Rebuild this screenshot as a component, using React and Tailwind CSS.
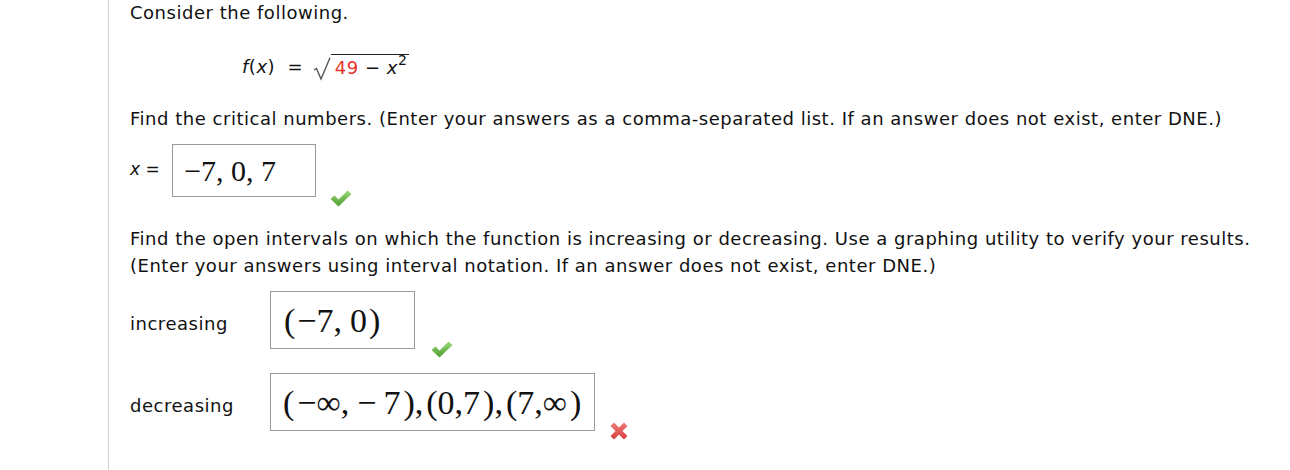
import React from "react";

function Check() {
  return (
    <svg width="22" height="17" viewBox="0 0 22 17">
      <defs>
        <linearGradient id="cg" x1="0" y1="0" x2="0" y2="1">
          <stop offset="0" stopColor="#9ad978" />
          <stop offset="1" stopColor="#4f9b31" />
        </linearGradient>
      </defs>
      <path d="M0.5 9 L4.5 5.5 L8.5 9.5 L17.5 0.5 L21.5 4 L8.5 16.5 Z" fill="url(#cg)" />
    </svg>
  );
}

function Cross() {
  return (
    <svg width="20" height="20" viewBox="0 0 20 20">
      <defs>
        <linearGradient id="xg" x1="0" y1="0" x2="0" y2="1">
          <stop offset="0" stopColor="#f07a78" />
          <stop offset="1" stopColor="#d9403e" />
        </linearGradient>
      </defs>
      <path d="M1.5 5 L5 1.5 L10 6.5 L15 1.5 L18.5 5 L13.5 10 L18.5 15 L15 18.5 L10 13.5 L5 18.5 L1.5 15 L6.5 10 Z" fill="url(#xg)" />
    </svg>
  );
}

export default function App() {
  const sans = { fontFamily: '"DejaVu Sans", Verdana, sans-serif' };
  const serif = { fontFamily: '"Liberation Serif", "DejaVu Serif", serif' };
  return (
    <div className="w-[1290px] h-[470px] bg-white flex text-[#111]" style={sans}>
      <div className="w-[109px] border-r border-[#d0d0d0]" />
      <div className="pl-[21px] pt-[1px] text-[18px] tracking-[0.52px]">
        <div className="h-[24px] leading-[24px]">Consider the following.</div>
        <div className="mt-[27px] ml-[112px] flex items-end h-[30px] leading-[30px]">
          <span><i>f</i>(<i>x</i>)&nbsp; = &nbsp;</span>
          <span className="flex items-end -ml-[3px]">
            <svg width="18" height="24" viewBox="0 0 18 24" className="mb-[1px]">
              <path d="M1 13 L3.5 11.5 L8 22 L17 0.7" stroke="#555" strokeWidth="1.4" fill="none" />
            </svg>
            <span className="border-t border-[#222] pl-[4px] pr-[2px] leading-[26px] mb-[1px]">
              <span className="text-[#e8322c]">49</span> &minus; <i>x</i><sup className="text-[14px] relative top-[-9px]">2</sup>
            </span>
          </span>
        </div>
        <div className="mt-[25px] h-[24px] leading-[24px]">
          Find the critical numbers. (Enter your answers as a comma-separated list. If an answer does not exist, enter DNE.)
        </div>
        <div className="mt-[13px] flex">
          <div className="flex items-center h-[52px] text-[17px] tracking-normal"><i>x</i>&nbsp;=&nbsp;</div>
          <div className="ml-[7px] w-[144px] h-[53px] border border-[#999] flex items-center pl-[11px] text-[30px] tracking-normal" style={serif}>
            &minus;7,&nbsp;0,&nbsp;7
          </div>
          <div className="ml-[14px] mt-[46px]"><Check /></div>
        </div>
        <div className="mt-[19px] h-[26px] leading-[26px]">
          Find the open intervals on which the function is increasing or decreasing. Use a graphing utility to verify your results.
        </div>
        <div className="h-[27px] leading-[27px]">
          (Enter your answers using interval notation. If an answer does not exist, enter DNE.)
        </div>
        <div className="mt-[12px] flex">
          <div className="w-[140px] flex items-center h-[58px] pt-[7px]">increasing</div>
          <div className="w-[145px] h-[58px] border border-[#999] flex items-center pl-[13px] text-[34px] tracking-normal" style={serif}>
            <span>(</span><span className="ml-[2px]">&minus;7,</span><span className="ml-[8px]">0</span><span className="ml-[2px]">)</span>
          </div>
          <div className="ml-[16px] mt-[50px]"><Check /></div>
        </div>
        <div className="mt-[15px] flex">
          <div className="w-[140px] flex items-center h-[58px] pt-[7px]">decreasing</div>
          <div className="w-[325px] h-[58px] border border-[#999] flex items-center pl-[12px] text-[34px] tracking-normal" style={serif}>
            <span>(</span>
            <span className="ml-[3px]">&minus;&infin;,</span>
            <span className="ml-[8px]">&minus;</span>
            <span className="ml-[7px]">7</span>
            <span className="ml-[3px]">),</span>
            <span className="ml-[3px]">(0,7</span>
            <span className="ml-[3px]">),</span>
            <span className="ml-[3px]">(7,&infin;</span>
            <span className="ml-[3px]">)</span>
          </div>
          <div className="ml-[14px] mt-[48px]"><Cross /></div>
        </div>
      </div>
    </div>
  );
}
